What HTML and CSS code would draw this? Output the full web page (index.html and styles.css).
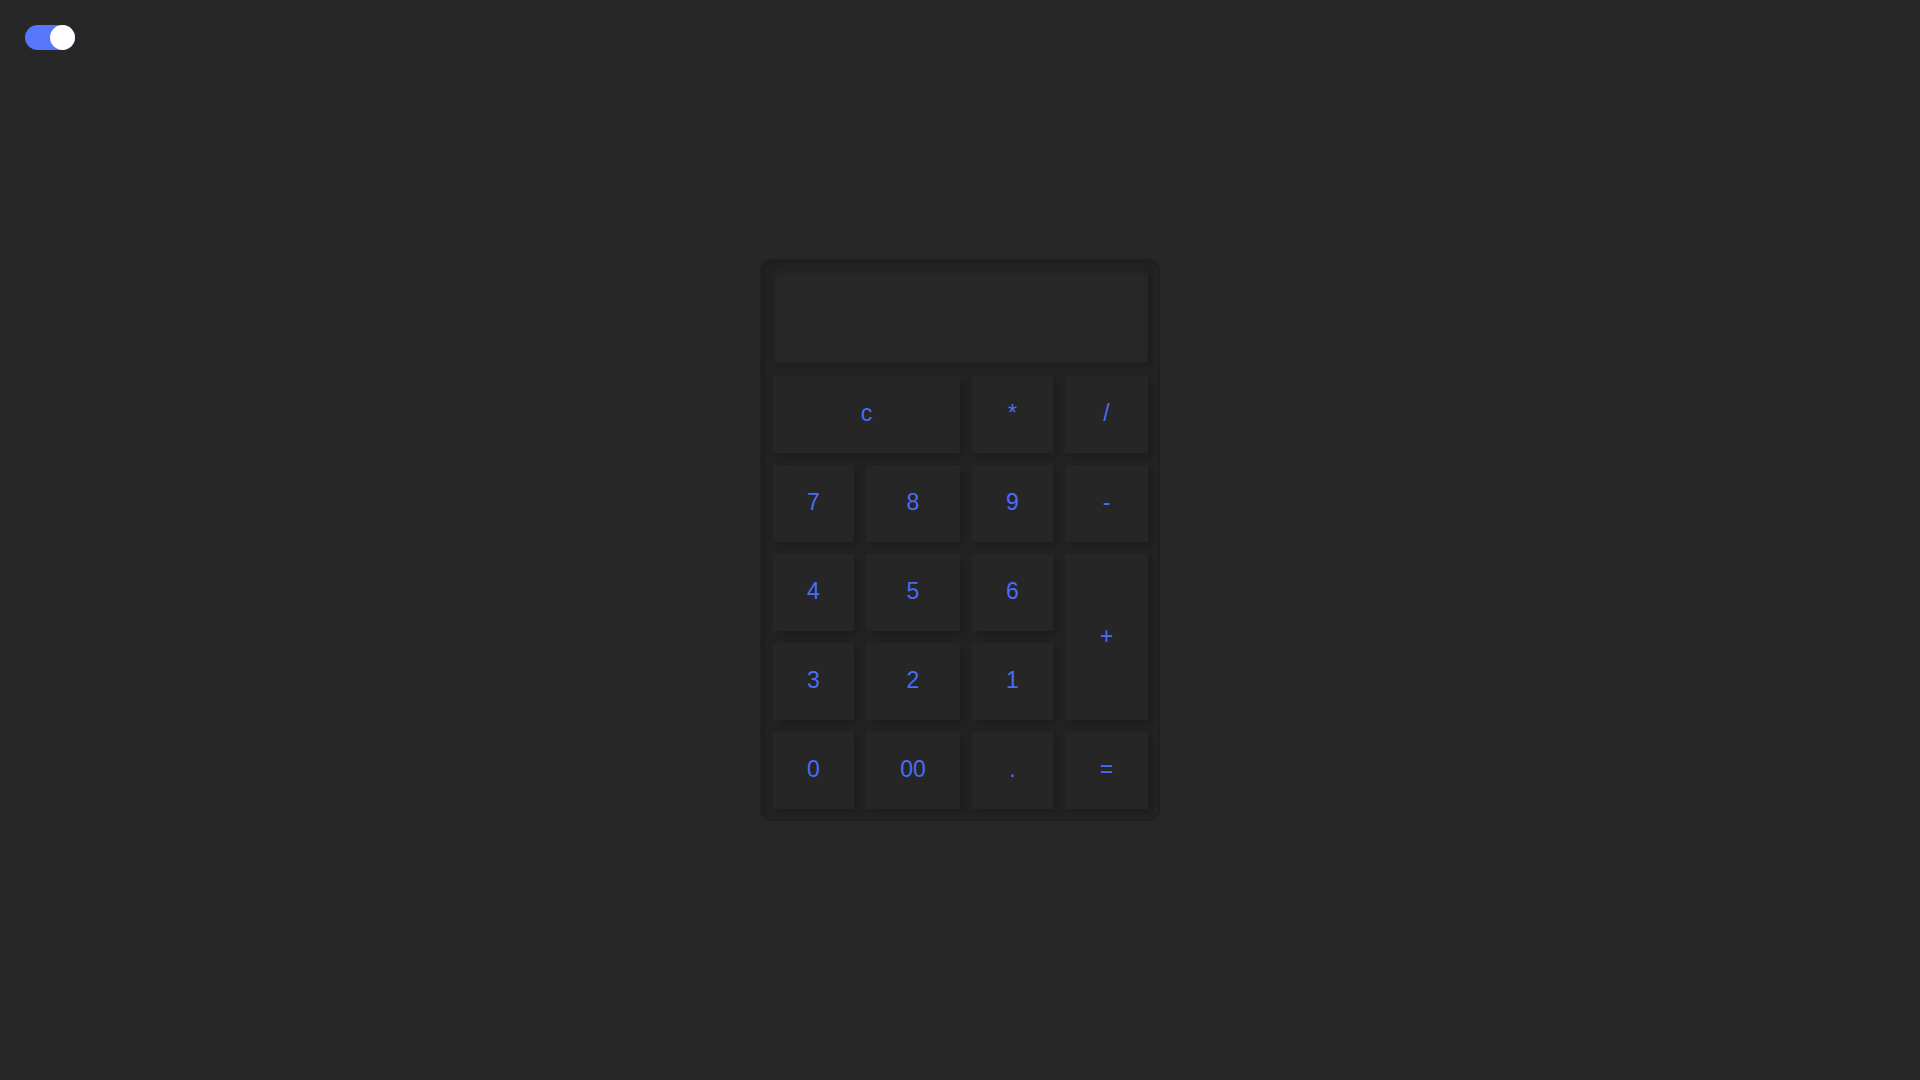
FILE: index.html
```html
<!DOCTYPE html>
<html lang="en">
<head>
    <meta charset="UTF-8">
    <meta name="viewport" content="width=device-width, initial-scale=1.0">
    <title>Calculator</title>
    <link rel="stylesheet" href="styles.css">
</head>
<body>
    <label class="theme-switch">
        <input type="checkbox" checked>
        <span class="slider"></span>
    </label>

    <div class="calculator">
        <div class="display" id="display"></div>
        <div class="keys">
            <button class="key wide">c</button>
            <button class="key">*</button>
            <button class="key">/</button>

            <button class="key">7</button>
            <button class="key">8</button>
            <button class="key">9</button>
            <button class="key">-</button>

            <button class="key">4</button>
            <button class="key">5</button>
            <button class="key">6</button>
            <button class="key tall">+</button>

            <button class="key">3</button>
            <button class="key">2</button>
            <button class="key">1</button>

            <button class="key">0</button>
            <button class="key">00</button>
            <button class="key">.</button>
            <button class="key">=</button>
        </div>
    </div>
</body>
</html>
```

FILE: styles.css
```css
* {
    box-sizing: border-box;
}

body {
    margin: 0;
    min-height: 100vh;
    display: grid;
    place-items: center;
    background-color: #272727;
    font-family: 'Liberation Sans', Arial, sans-serif;
}

/* theme toggle in the top left corner */
.theme-switch {
    position: fixed;
    top: 25px;
    left: 25px;
    width: 50px;
    height: 25px;
    cursor: pointer;
}

.theme-switch input {
    display: none;
}

.slider {
    display: block;
    width: 100%;
    height: 100%;
    border-radius: 13px;
    background-color: #ccc;
    position: relative;
}

.slider::before {
    content: "";
    position: absolute;
    top: 0;
    left: 0;
    width: 25px;
    height: 25px;
    border-radius: 50%;
    background-color: #fff;
    transition: transform 0.3s;
}

.theme-switch input:checked + .slider {
    background-color: #5677fc;
}

.theme-switch input:checked + .slider::before {
    transform: translateX(25px);
}

.calculator {
    width: 400px;
    padding: 12px 12px 12px 13px;
    border-radius: 12px;
    background-color: #242424;
    box-shadow: inset 0 0 0 2px #202020, inset 4px 4px 8px #1d1d1d, inset -3px -3px 6px #2a2a2a;
}

.display {
    width: 375px;
    height: 92px;
    margin-bottom: 13px;
    background-color: #272727;
    color: #4a6cf7;
    font-size: 32px;
    line-height: 92px;
    text-align: right;
    padding: 0 16px;
    box-shadow: inset 1px 1px 4px #222, 3px 3px 6px #1c1c1c;
}

.keys {
    display: grid;
    grid-template-columns: 81px 94px 81px 83px;
    grid-auto-rows: 77px;
    column-gap: 12px;
    row-gap: 12px;
}

.key {
    border: none;
    padding: 0 0 2px;
    background-color: #262626;
    color: #4a6cf7;
    font-family: inherit;
    font-size: 23px;
    cursor: pointer;
    box-shadow: 4px 4px 8px #1c1c1c;
}

.key:active {
    box-shadow: inset 3px 3px 6px #1c1c1c;
}

.wide {
    grid-column: span 2;
}

.tall {
    grid-row: span 2;
}
```
